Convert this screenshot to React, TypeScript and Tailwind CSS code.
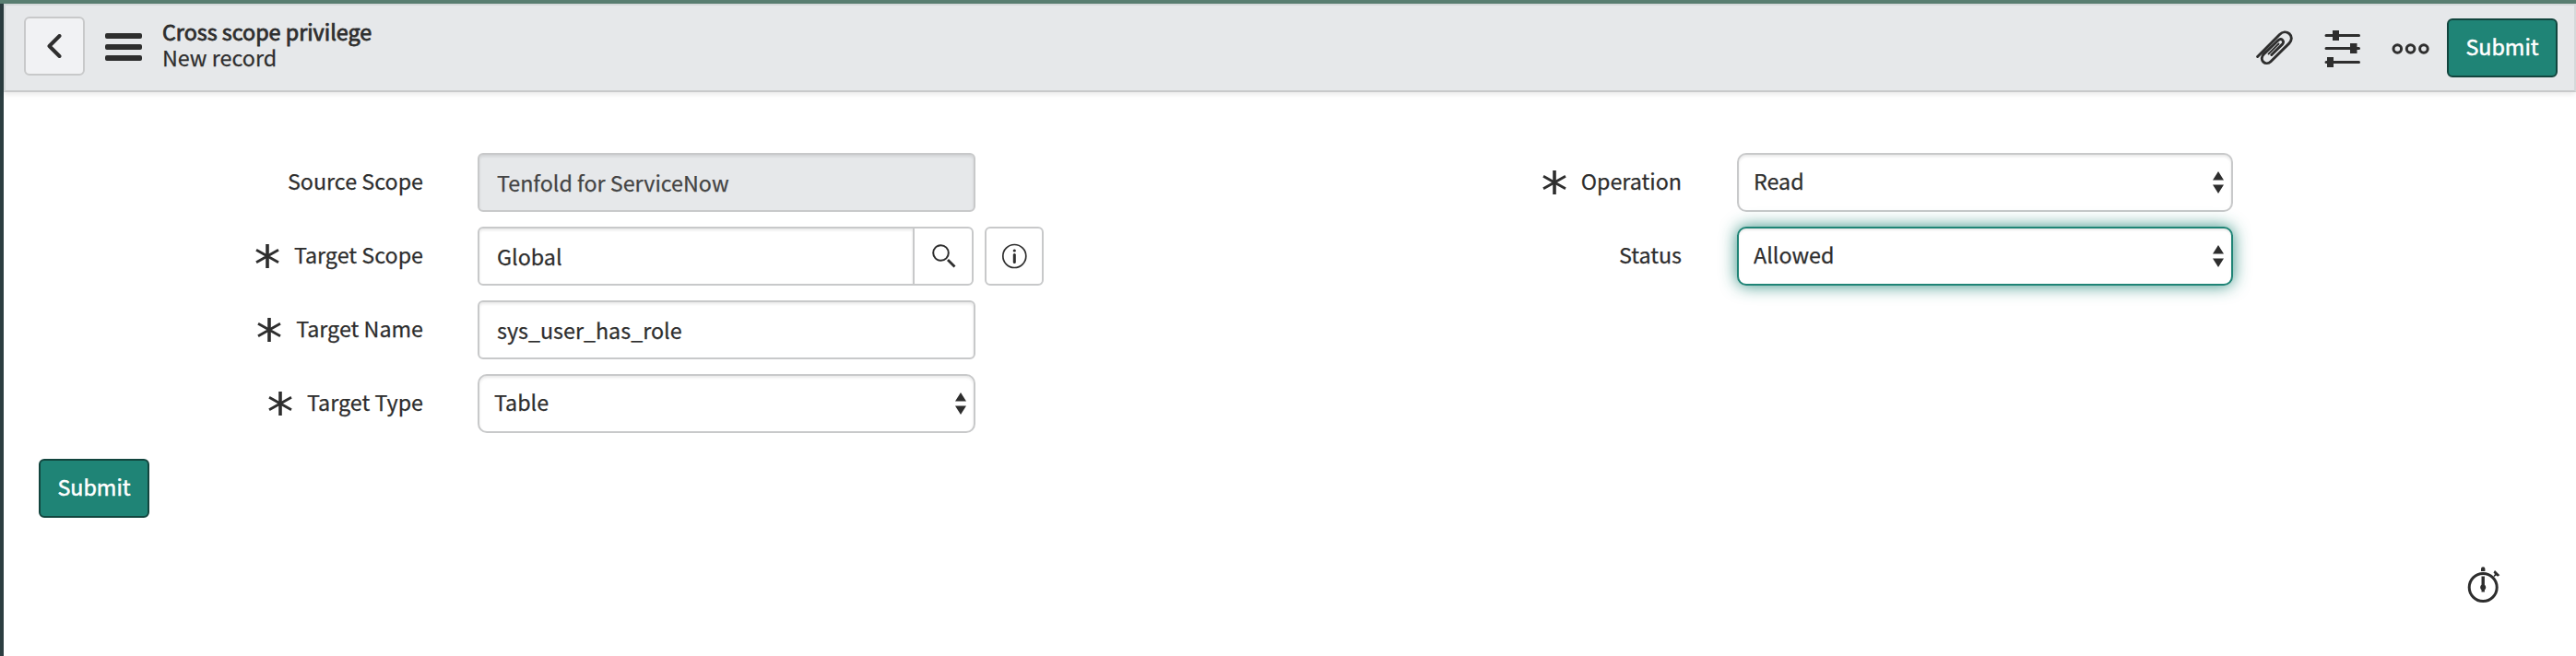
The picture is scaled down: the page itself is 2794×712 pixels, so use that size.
import React from "react";

const iconColor = "#2e2e2e";

const Asterisk = () => (
  <svg width="26" height="26" viewBox="0 0 26 26" stroke={iconColor} className="mr-4 shrink-0">
    <path d="M13 0v26" strokeWidth="3.6" />
    <path d="M1 6.200l24 13.600M25 6.200L1 19.800" strokeWidth="2.800" />
  </svg>
);

const Label = ({ text, required }: { text: string; required?: boolean }) => (
  <label className="-mr-px flex h-16 items-center justify-end">
    {required ? <Asterisk /> : null}
    <span className="pb-1 whitespace-nowrap">{text}</span>
  </label>
);

const inputStyles =
  "block h-16 border-2 border-[#c8c9ca] pr-5 pl-[19px] outline-none shadow-[inset_0_2px_3px_rgba(0,0,0,0.09)]";

const Select = ({ value, focused }: { value: string; focused?: boolean }) => (
  <div
    className={`relative h-16 w-full rounded-[10px] border-2 bg-white ${
      focused
        ? "border-[#1f8476] shadow-[inset_0_2px_2px_rgba(0,0,0,0.075),0_0_18px_rgba(31,132,118,0.9)]"
        : "border-[#c8c9ca] shadow-[inset_0_2px_3px_rgba(0,0,0,0.09)]"
    }`}
  >
    <select className="h-full w-full appearance-none bg-transparent pb-1 pl-4 outline-none">
      <option>{value}</option>
    </select>
    <svg width="12" height="24" viewBox="0 0 12 24" fill={iconColor} className="pointer-events-none absolute top-[18px] right-2">
      <path d="M6 0l6 9.600H0zM6 24l6-9.600H0z" />
    </svg>
  </div>
);

const SubmitButton = () => (
  <button className="flex h-16 w-[120px] items-center justify-center rounded-md border-2 border-[#12453e] bg-[#1f8476] pb-1 text-white [-webkit-text-stroke:0.5px_white]">
    Submit
  </button>
);

const Header = () => (
  <header className="flex h-24 items-start justify-between border-2 border-[#d5d9da] border-b-[#c8c9ca] bg-[#e6e8ea] pr-[18px] pl-5 shadow-[0_2px_6px_rgba(0,0,0,0.1)]">
    <div className="flex">
      <button className="mt-3 flex h-16 w-[66px] items-center justify-center rounded-md border-2 border-[#c8c9ca] bg-[#f1f2f4]">
        <svg width="16" height="26" viewBox="0 0 16 26" fill="none" stroke={iconColor} strokeWidth="4" strokeLinecap="round" strokeLinejoin="round">
          <path d="M13.500 2L2.500 13l11 11" />
        </svg>
      </button>
      <div className="mt-[30px] ml-[22px] flex w-10 flex-col gap-1.5">
        <span className="h-1.5 rounded-[2px] bg-[#2e2e2e]" />
        <span className="h-1.5 rounded-[2px] bg-[#2e2e2e]" />
        <span className="h-1.5 rounded-[2px] bg-[#2e2e2e]" />
      </div>
      <div className="mt-[14px] ml-[22px] leading-[28px]">
        <h1 className="[-webkit-text-stroke:0.8px_#2e2e2e]">Cross scope privilege</h1>
        <h2>New record</h2>
      </div>
    </div>
    <div className="flex">
      <svg width="40" height="38" viewBox="0 0 40 38" fill="none" stroke={iconColor} strokeWidth="2.900" strokeLinecap="round" strokeLinejoin="round" className="mt-[27px]">
        <path d="M1.600 28.500L25.500 4.500c3.200-3.200 7.500-3.600 10.600-.8s2.900 7.200-.3 10.400L16 33.700c-2.400 2.400-6 2.600-8.200.4s-2-5.700.4-8.100L24 10.800c1.500-1.400 3.400-1.600 4.700-.3s1.100 3.200-.3 4.600L16.800 26.500" />
        <path d="M13.500 25.500L24.500 14.500" strokeWidth="1.800" />
      </svg>
      <svg width="40" height="40" viewBox="0 0 40 40" className="mt-[27px] ml-[34px]">
        <path d="M2 5.500h35.500M2 19.500h35.500M2 34.500h35.500" stroke={iconColor} strokeWidth="3" strokeLinecap="round" />
        <path d="M9 0h7v11H9zM28 14h7.500v11H28zM3 29h7v11H3z" fill={iconColor} />
      </svg>
      <svg width="41" height="12" viewBox="0 0 41 12" fill="none" stroke={iconColor} strokeWidth="3" className="mt-[41px] ml-[33px]">
        <circle cx="6.300" cy="6" r="4.300" />
        <circle cx="20.600" cy="6" r="4.300" />
        <circle cx="34.900" cy="6" r="4.300" />
      </svg>
      <div className="mt-[14px] ml-[19px]">
        <SubmitButton />
      </div>
    </div>
  </header>
);

const App = () => {
  return (
    <div className="flex h-[712px] w-[2794px] flex-col overflow-hidden bg-white font-['Noto_Sans_CJK_SC',sans-serif] text-[23.3px] leading-[34px] text-[#2e2e2e] [-webkit-text-stroke:0.25px_currentColor]">
      <div className="h-1 shrink-0 bg-[#5a7f72]" />
      <div className="flex flex-1">
        <aside className="w-1 shrink-0 bg-[#2c3e41]" />
        <main className="flex flex-1 flex-col">
          <Header />
          <form className="mt-[66px] flex">
            <div className="grid w-[1128px] grid-cols-[454px_540px] content-start gap-x-[60px] gap-y-4">
              <Label text="Source Scope" />
              <input className={`${inputStyles} w-full rounded-md bg-[#e6e8ea] text-[#444]`} defaultValue="Tenfold for ServiceNow" readOnly />
              <Label text="Target Scope" required />
              <div className="flex">
                <input className={`${inputStyles} w-[474px] shrink-0 rounded-l-md`} defaultValue="Global" />
                <button type="button" className="-ml-0.5 flex h-16 w-[66px] shrink-0 items-center justify-center rounded-r-md border-2 border-[#c8c9ca]">
                  <svg width="26" height="26" viewBox="0 0 26 26" fill="none" stroke={iconColor} className="ml-px">
                    <circle cx="9.500" cy="9.500" r="8.300" strokeWidth="2" />
                    <path d="M17 17l7.500 7.500" strokeWidth="2.800" />
                  </svg>
                </button>
                <button type="button" className="ml-3 flex h-16 w-16 shrink-0 items-center justify-center rounded-md border-2 border-[#c8c9ca]">
                  <svg width="28" height="28" viewBox="0 0 28 28" fill="none" stroke={iconColor}>
                    <circle cx="14.300" cy="14" r="12.500" strokeWidth="1.700" />
                    <path d="M14.300 12.500v8" strokeWidth="3" strokeLinecap="round" />
                    <circle cx="14.300" cy="8" r="1.600" fill={iconColor} stroke="none" />
                  </svg>
                </button>
              </div>
              <Label text="Target Name" required />
              <input className={`${inputStyles} w-full rounded-md`} defaultValue="sys_user_has_role" />
              <Label text="Target Type" required />
              <Select value="Table" />
            </div>
            <div className="ml-[148px] grid grid-cols-[543px_538px] content-start gap-x-[61px] gap-y-4">
              <Label text="Operation" required />
              <Select value="Read" />
              <Label text="Status" />
              <Select value="Allowed" focused />
            </div>
          </form>
          <div className="mt-7 ml-[38px]">
            <SubmitButton />
          </div>
          <div className="mt-[53px] mr-[82px] flex justify-end">
            <svg width="36" height="40" viewBox="0 0 36 40" fill="none" stroke={iconColor}>
              <circle cx="17.200" cy="22.500" r="15" strokeWidth="3" />
              <path d="M17.200 10.500v17" strokeWidth="3.400" />
              <circle cx="17.200" cy="22.500" r="3" fill={iconColor} stroke="none" />
              <path d="M15 5V2.500a2.200 2.200 0 0 1 4.400 0V5z" fill={iconColor} stroke="none" />
              <path d="M30 4l5.300 5.200-2.300 1.500-1.500-1.200-2.200 1.500-.8-.8 1.500-2.200-1.500-1.500z" fill={iconColor} stroke="none" />
            </svg>
          </div>
        </main>
      </div>
    </div>
  );
};

export default App;
